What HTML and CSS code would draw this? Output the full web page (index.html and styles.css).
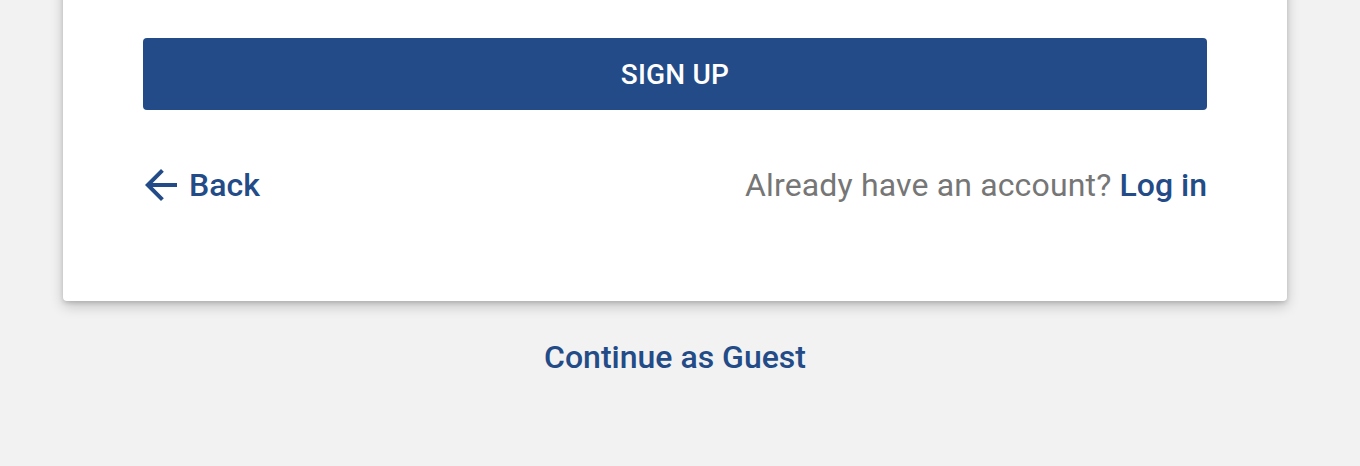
FILE: index.html
```html
<!DOCTYPE html>
<html lang="en">
<head>
<meta charset="utf-8">
<title>Sign up</title>
<link rel="stylesheet" href="styles.css">
</head>
<body>
<div class="page">
  <div class="card">
    <button class="btn-primary" type="button">SIGN UP</button>
    <div class="actions">
      <a class="back" href="#">
        <svg class="back-icon" viewBox="4 4 16 16" width="32" height="32" aria-hidden="true"><path d="M20 11H7.83l5.59-5.59L12 4l-8 8 8 8 1.41-1.41L7.83 13H20v-2z" fill="currentColor"/></svg>
        <span>Back</span>
      </a>
      <p class="login">Already have an account? <a href="#">Log in</a></p>
    </div>
  </div>
  <a class="guest" href="#">Continue as Guest</a>
</div>
</body>
</html>
```
FILE: styles.css
```css
html, body {
  margin: 0;
  padding: 0;
  background: #f2f2f2;
  font-family: Roboto, "Liberation Sans", Arial, sans-serif;
  overflow: hidden;
}
.page {
  width: 1350px;
  display: flex;
  flex-direction: column;
  align-items: center;
}
.card {
  width: 1224px;
  box-sizing: border-box;
  margin-top: -20px;
  padding: 58px 80px 92px;
  background: #fff;
  border-radius: 4px;
  box-shadow: 0 2px 4px rgba(0,0,0,0.14), 0 5px 14px rgba(0,0,0,0.2);
}
.btn-primary {
  display: block;
  width: 100%;
  height: 72px;
  border: 0;
  border-radius: 4px;
  background: #234b87;
  color: #fff;
  font-family: inherit;
  font-size: 28px;
  font-weight: 500;
  letter-spacing: 0.2px;
  cursor: pointer;
}
.actions {
  margin-top: 51px;
  display: flex;
  align-items: center;
  justify-content: space-between;
  height: 48px;
}
.back {
  display: flex;
  align-items: center;
  gap: 12px;
  color: #234b87;
  text-decoration: none;
  font-size: 32px;
  font-weight: 500;
  padding-left: 2px;
}
.back-icon {
  display: block;
}
.login {
  margin: 0;
  font-size: 32px;
  letter-spacing: 0.15px;
  color: #767676;
}
.login a {
  color: #234b87;
  font-weight: 500;
  letter-spacing: 0;
  text-decoration: none;
}
.guest {
  margin-top: 32px;
  line-height: 48px;
  font-size: 32px;
  font-weight: 500;
  color: #234b87;
  text-decoration: none;
}
```
